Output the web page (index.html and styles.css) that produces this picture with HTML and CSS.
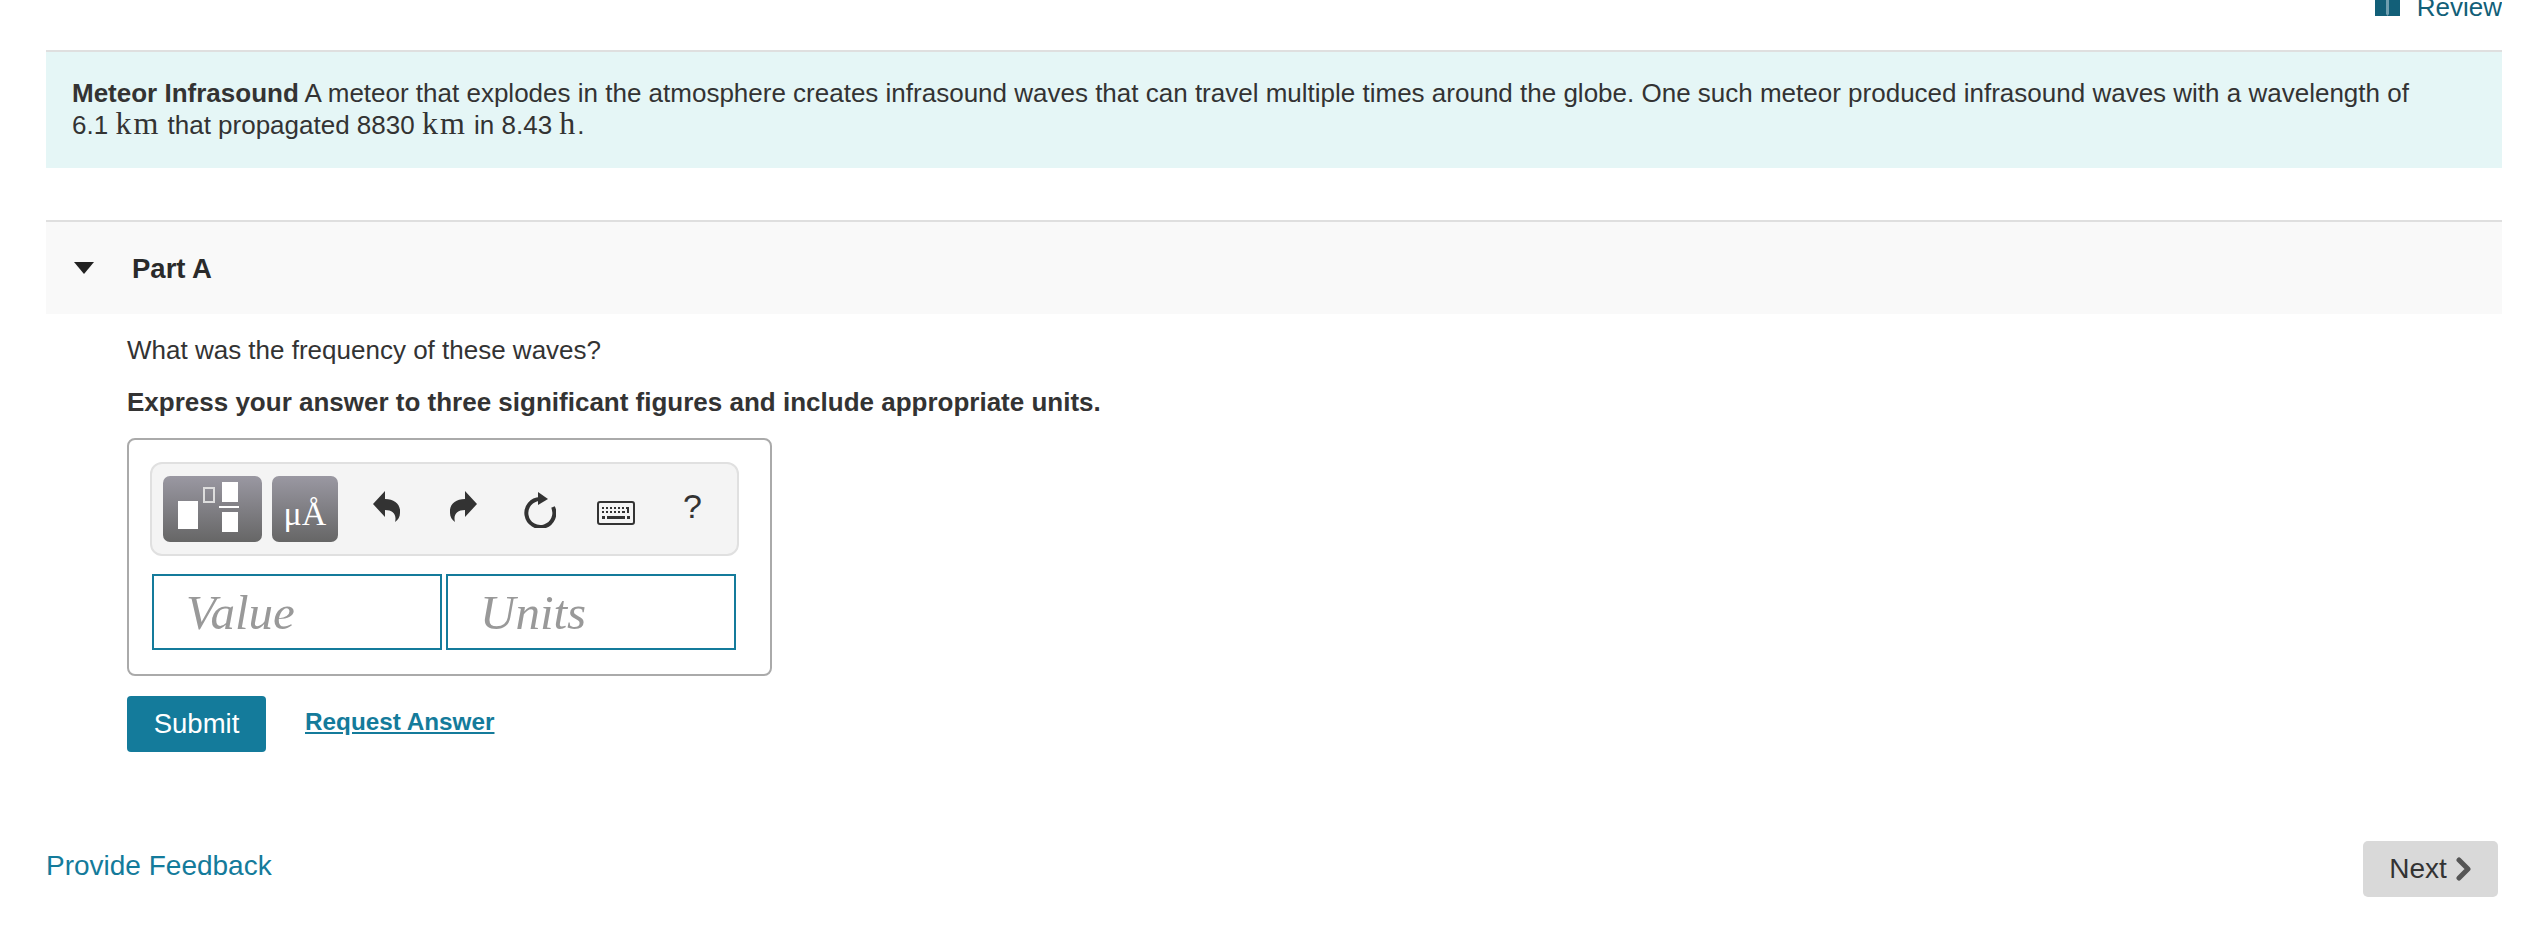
FILE: index.html
```html
<!DOCTYPE html>
<html lang="en">
<head>
    <meta charset="UTF-8">
    <title>Part A</title>
    <link rel="stylesheet" href="styles.css">
</head>
<body>
    <div class="top-bar">
        <a class="review-link">
            <svg class="book-icon" viewBox="0 0 25 16"><path d="M0 0H25V16H0Z"/><path class="book-spine" d="M11 0H14V14L12.5 16L11 14Z"/></svg>
            Review
        </a>
    </div>

    <div class="intro">
        <p><b>Meteor Infrasound</b> A meteor that explodes in the atmosphere creates infrasound waves that can travel multiple times around the globe. One such meteor produced infrasound waves with a wavelength of<br>6.1 <span class="math">km</span> that propagated 8830 <span class="math">km</span> in 8.43 <span class="math">h</span>.</p>
    </div>

    <div class="part-head">
        <span class="triangle"></span>
        <span class="part-title">Part A</span>
    </div>

    <div class="part-body">
        <p class="question">What was the frequency of these waves?</p>
        <p class="instruction">Express your answer to three significant figures and include appropriate units.</p>

        <div class="answer-box">
            <div class="toolbar">
                <div class="tool-btn tool-btn-wide">
                    <svg viewBox="0 0 99 66" width="99" height="66">
                        <rect class="white" x="15" y="25" width="20" height="28"/>
                        <rect class="hollow" x="41" y="12" width="10" height="14"/>
                        <rect class="white" x="59" y="6" width="16" height="20"/>
                        <rect class="white" x="56" y="30" width="20" height="2"/>
                        <rect class="white" x="59" y="36" width="16" height="20"/>
                    </svg>
                </div>
                <div class="tool-btn tool-btn-units">μÅ</div>
                <svg class="icon icon-undo" viewBox="0 0 27 31"><path d="M0 13L12 0V8C22 8 28 14 27 22C27 26 25 29 22 31C24 24 20 19 12 19V26Z"/></svg>
                <svg class="icon icon-redo" viewBox="0 0 27 31"><path d="M0 13L12 0V8C22 8 28 14 27 22C27 26 25 29 22 31C24 24 20 19 12 19V26Z"/></svg>
                <svg class="icon icon-reset" viewBox="0 0 32 36">
                    <path class="ring" d="M16 7A14 14 0 1 0 29 15"/>
                    <path d="M14 0L24 7L14 13Z"/>
                </svg>
                <svg class="icon icon-keyboard" viewBox="0 0 38 24">
                    <rect class="kb-frame" x="1" y="1" width="36" height="22" rx="2"/>
                    <path class="kb-keys" d="M5 6h2v2h-2zM9 6h2v2h-2zM13 6h2v2h-2zM17 6h2v2h-2zM21 6h2v2h-2zM25 6h2v2h-2zM29 6h3v6h-2v-4h-1zM5 10h2v2h-2zM9 10h2v2h-2zM13 10h2v2h-2zM17 10h2v2h-2zM21 10h2v2h-2zM25 10h3v2h-3zM5 15h3v3h-3zM10 15h18v3h-18zM30 15h3v3h-3z"/>
                </svg>
                <span class="help">?</span>
            </div>
            <div class="inputs">
                <input class="answer-input" type="text" placeholder="Value">
                <input class="answer-input" type="text" placeholder="Units">
            </div>
        </div>

        <div class="actions">
            <button class="submit">Submit</button>
            <a class="request">Request Answer</a>
        </div>
    </div>

    <div class="footer">
        <a class="feedback">Provide Feedback</a>
        <button class="next">Next
            <svg class="chevron" viewBox="0 0 16 24"><path d="M3 3L12 12L3 21"/></svg>
        </button>
    </div>
</body>
</html>
```

FILE: styles.css
```css
html, body {
    height: 100%;
}

body {
    margin: 0;
    padding: 0 44px 0 46px;
    height: 944px;
    box-sizing: border-box;
    overflow: hidden;
    background: #fff;
    color: #333;
    font-family: "Liberation Sans", Arial, sans-serif;
    font-size: 26px;
}

p {
    margin: 0;
}

/* header, the page is scrolled so the text is cut at the top */
.top-bar {
    height: 50px;
    overflow: hidden;
    display: flex;
    justify-content: flex-end;
    align-items: flex-start;
}

.review-link {
    display: flex;
    align-items: flex-end;
    gap: 17px;
    margin-top: -11px;
    color: #125f78;
    font-size: 26px;
    line-height: 36px;
}

.book-icon {
    width: 25px;
    height: 16px;
    margin-bottom: 9px;
    fill: #125f78;
}

.book-spine {
    fill: #6f9fb0;
}

.intro {
    height: 118px;
    box-sizing: border-box;
    padding: 25px 26px 0;
    background: #e5f6f6;
    border-top: 2px solid #dfdfdf;
    line-height: 32px;
    color: #333;
}

.math {
    font-family: "Liberation Serif", serif;
    font-size: 32px;
    line-height: 26px;
    letter-spacing: 2px;
}

.part-head {
    margin-top: 52px;
    height: 94px;
    box-sizing: border-box;
    display: flex;
    align-items: center;
    background: #f9f9f9;
    border-top: 2px solid #dfdfdf;
    padding-left: 28px;
}

.triangle {
    width: 0;
    height: 0;
    border-left: 10px solid transparent;
    border-right: 10px solid transparent;
    border-top: 12px solid #222;
    margin-right: 38px;
}

.part-title {
    margin-top: 2px;
    font-size: 27.5px;
    font-weight: bold;
    color: #2a2a2a;
}

.part-body {
    padding-left: 81px;
}

.question {
    margin-top: 21px;
    line-height: 30px;
}

.instruction {
    margin-top: 22px;
    line-height: 30px;
    font-weight: bold;
}

.answer-box {
    width: 645px;
    height: 238px;
    box-sizing: border-box;
    margin-top: 21px;
    padding: 22px 21px 0;
    border: 2px solid #aaa;
    border-radius: 8px;
}

.toolbar {
    width: 589px;
    height: 94px;
    box-sizing: border-box;
    display: flex;
    align-items: center;
    padding-left: 11px;
    background: #f4f4f4;
    border: 2px solid #e0e0e0;
    border-radius: 12px;
}

.tool-btn {
    height: 66px;
    border-radius: 7px;
    background: linear-gradient(#9a98a2, #666);
    color: #fff;
}

.tool-btn-wide {
    width: 99px;
}

.tool-btn-wide svg {
    display: block;
}

.white {
    fill: #fff;
}

.hollow {
    fill: none;
    stroke: #ddd;
    stroke-width: 2;
}

.tool-btn-units {
    width: 66px;
    margin-left: 10px;
    text-align: center;
    font-family: "Liberation Serif", serif;
    font-size: 34px;
    line-height: 76px;
    white-space: nowrap;
}

.icon {
    fill: #333;
    flex: none;
}

.icon-undo {
    width: 27px;
    height: 31px;
    margin-left: 35px;
    margin-top: -5px;
}

.icon-redo {
    width: 27px;
    height: 31px;
    margin-left: 50px;
    margin-top: -5px;
    transform: scaleX(-1);
}

.icon-reset {
    width: 32px;
    height: 36px;
    margin-left: 47px;
    margin-top: 2px;
}

.ring {
    fill: none;
    stroke: #333;
    stroke-width: 4;
}

.icon-keyboard {
    width: 38px;
    height: 24px;
    margin-left: 41px;
    margin-top: 8px;
}

.kb-frame {
    fill: #f4f4f4;
    stroke: #333;
    stroke-width: 2;
}

.help {
    margin-left: 48px;
    margin-top: -6px;
    font-size: 34px;
    color: #333;
}

.inputs {
    display: flex;
    gap: 4px;
    margin-top: 18px;
    margin-left: 2px;
}

.answer-input {
    width: 290px;
    height: 76px;
    box-sizing: border-box;
    padding: 0 0 0 32px;
    border: 2px solid #147b9b;
    border-radius: 0;
    outline: none;
    font-family: "Liberation Serif", serif;
    font-style: italic;
    font-size: 49px;
}

.answer-input::placeholder {
    color: #999;
    opacity: 1;
}

.actions {
    display: flex;
    align-items: center;
    gap: 39px;
    margin-top: 20px;
}

.submit {
    width: 139px;
    height: 56px;
    padding: 0;
    border: none;
    border-radius: 4px;
    background: #147b9b;
    color: #fff;
    font-family: inherit;
    font-size: 27.5px;
}

.request {
    margin-top: -4px;
    color: #147b9b;
    font-weight: bold;
    font-size: 24.3px;
    text-decoration: underline;
}

.footer {
    display: flex;
    justify-content: space-between;
    align-items: flex-start;
    margin-top: 89px;
    padding-right: 4px;
}

.feedback {
    margin-top: 8px;
    color: #147b9b;
    font-size: 28px;
    line-height: 34px;
}

.next {
    display: flex;
    align-items: center;
    justify-content: center;
    gap: 9px;
    width: 135px;
    height: 56px;
    padding: 0;
    border: none;
    border-radius: 5px;
    background: #d9d9d9;
    color: #333;
    font-family: inherit;
    font-size: 28px;
}

.chevron {
    width: 16px;
    height: 24px;
    fill: none;
    stroke: #555;
    stroke-width: 5;
    stroke-linecap: round;
    stroke-linejoin: round;
}
```
